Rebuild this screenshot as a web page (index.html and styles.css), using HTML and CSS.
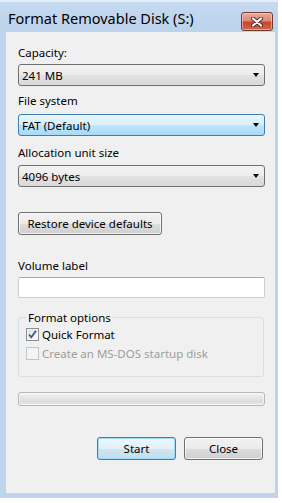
FILE: index.html
```html
<!DOCTYPE html>
<html>
<head>
<meta charset="utf-8">
<link rel="stylesheet" href="styles.css">
</head>
<body>
<div class="window">
  <div class="titlebar">
    <span class="title">Format Removable Disk (S:)</span>
    <div class="close-btn">
      <svg width="14" height="10" viewBox="0 0 14 10">
        <path d="M3 1.5 L11 8.5 M11 1.5 L3 8.5" stroke="#4a2a26" stroke-width="4" stroke-linecap="round"/>
        <path d="M3 1.5 L11 8.5 M11 1.5 L3 8.5" stroke="#ffffff" stroke-width="2.2" stroke-linecap="round"/>
      </svg>
    </div>
  </div>
  <div class="client">
    <div class="label lbl-cap">Capacity:</div>
    <div class="combo combo-cap"><span>241 MB</span><span class="arrow"></span></div>

    <div class="label lbl-fs">File system</div>
    <div class="combo combo-fs focused"><span>FAT (Default)</span><span class="arrow"></span></div>

    <div class="label lbl-alloc">Allocation unit size</div>
    <div class="combo combo-alloc"><span>4096 bytes</span><span class="arrow"></span></div>

    <div class="btn restore">Restore device defaults</div>

    <div class="label lbl-vol">Volume label</div>
    <div class="textbox"></div>

    <fieldset class="group">
      <legend class="legend">Format options</legend>
      <div class="check-row">
        <span class="checkbox checked">
          <svg width="11" height="11" viewBox="0 0 11 11">
            <path d="M2 5.5 L4.3 8.3 L9 1.8" fill="none" stroke="#3d5a8a" stroke-width="1.8"/>
          </svg>
        </span>
        <span class="check-text">Quick Format</span>
      </div>
      <div class="check-row disabled">
        <span class="checkbox"></span>
        <span class="check-text">Create an MS-DOS startup disk</span>
      </div>
    </fieldset>

    <div class="progress"></div>

    <div class="buttons">
      <div class="btn default">Start</div>
      <div class="btn">Close</div>
    </div>
  </div>
</div>
</body>
</html>
```
FILE: styles.css
```css
html, body {
  margin: 0;
  padding: 0;
  background: #ffffff;
}

body {
  font-family: "Noto Sans", "Open Sans", sans-serif;
  font-size: 11.5px;
  color: #000000;
}

.window {
  width: 278px;
  height: 498px;
  box-sizing: border-box;
  background: #bed4ed;
  border-top: 2px solid #e4eef9;
  display: flex;
  flex-direction: column;
}

.titlebar {
  height: 30px;
  display: flex;
  align-items: flex-start;
  justify-content: space-between;
  background: linear-gradient(#c6daf0, #bcd3ec);
}

.title {
  font-size: 14.5px;
  line-height: 18px;
  margin: 7px 0 0 8px;
  color: #000;
}

.close-btn {
  width: 32px;
  height: 19px;
  box-sizing: border-box;
  margin: 10px 5px 0 0;
  border: 1px solid #6e3a33;
  border-radius: 3px;
  background: linear-gradient(#e9a99b 0%, #dc8a78 45%, #c7452f 55%, #d2694b 100%);
  box-shadow: inset 0 0 0 1px rgba(255, 220, 210, 0.5);
  display: flex;
  align-items: center;
  justify-content: center;
}

.client {
  margin: 0 3px 5px 6px;
  flex: 1;
  background: #f0f0f0;
  padding: 0 10px 0 12px;
  display: flex;
  flex-direction: column;
}

.label {
  line-height: 15px;
  height: 15px;
}

.lbl-cap { margin-top: 13px; }
.combo-cap { margin-top: 4px; }
.lbl-fs { margin-top: 7px; }
.combo-fs { margin-top: 6px; }
.lbl-alloc { margin-top: 9px; }
.combo-alloc { margin-top: 5px; }
.restore { margin-top: 25px; width: 144px; }
.lbl-vol { margin-top: 23px; }

.combo {
  height: 22px;
  box-sizing: border-box;
  border: 1px solid #707070;
  border-radius: 3px;
  background: linear-gradient(#f3f3f3 0%, #ececec 50%, #e2e2e2 51%, #d9d9d9 100%);
  display: flex;
  align-items: center;
  justify-content: space-between;
  padding: 0 5px 0 3px;
  line-height: 15px;
}

.combo.focused {
  border-color: #3c7fb1;
  background: linear-gradient(#eaf6fd 0%, #d9f0fc 50%, #bee6fd 51%, #a7d9f5 100%);
}

.arrow {
  width: 0;
  height: 0;
  border-left: 3.5px solid transparent;
  border-right: 3.5px solid transparent;
  border-top: 4px solid #000;
}

.btn {
  height: 23px;
  box-sizing: border-box;
  border: 1px solid #707070;
  border-radius: 3px;
  background: linear-gradient(#f2f2f2 0%, #ebebeb 50%, #dddddd 51%, #cfcfcf 100%);
  box-shadow: inset 0 0 0 1px rgba(255, 255, 255, 0.7);
  display: flex;
  align-items: center;
  justify-content: center;
  line-height: 15px;
}

.btn.default {
  border-color: #3c7fb1;
  box-shadow: inset 0 0 0 1px #9fdcf6;
  background: linear-gradient(#eef7fc 0%, #e2f0f8 50%, #cfe6f3 51%, #c2deee 100%);
}

.textbox {
  margin-top: 4px;
  height: 21px;
  box-sizing: border-box;
  background: #ffffff;
  border: 1px solid #c9ced4;
  border-top-color: #abadb3;
  border-radius: 2px;
}

.group {
  margin: 12px 1px 0 0;
  padding: 0 6px 14px 7px;
  border: 1px solid #d5dfe5;
  border-radius: 3px;
  min-width: 0;
}

.legend {
  padding: 0 2px;
  margin-left: 0;
  line-height: 15px;
}

.check-row {
  display: flex;
  align-items: center;
  height: 17px;
  gap: 3px;
  margin-top: 1px;
}

.check-row + .check-row {
  margin-top: 2px;
}

.checkbox {
  width: 13px;
  height: 13px;
  box-sizing: border-box;
  border: 1px solid #8e8f8f;
  background: linear-gradient(135deg, #dcdcdc, #ffffff);
  box-shadow: inset 0 0 0 1px #f4f4f4;
  display: flex;
  align-items: center;
  justify-content: center;
}

.check-row.disabled .checkbox {
  border-color: #c4c4c4;
  background: #f4f4f4;
  box-shadow: none;
}

.check-row.disabled .check-text {
  color: #9d9d9d;
}

.progress {
  margin-top: 15px;
  height: 14px;
  box-sizing: border-box;
  border: 1px solid #b6b6b6;
  border-radius: 3px;
  background: linear-gradient(#f3f3f3 0%, #e6e6e6 40%, #dcdcdc 70%, #e8e8e8 100%);
  box-shadow: inset 0 0 0 1px rgba(255, 255, 255, 0.6);
}

.buttons {
  margin-top: 31px;
  display: flex;
  justify-content: flex-end;
  gap: 8px;
  padding-right: 2px;
}

.buttons .btn {
  width: 79px;
}
```
